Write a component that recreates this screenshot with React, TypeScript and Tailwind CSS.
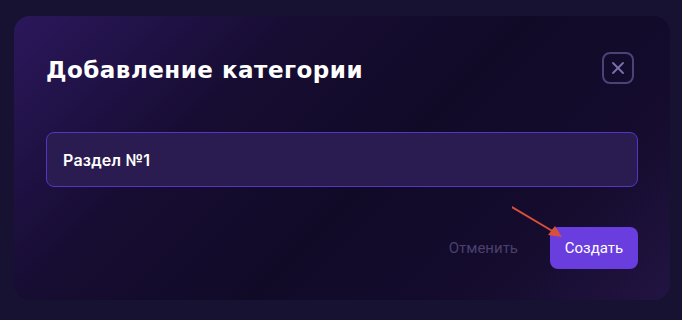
import { X } from "lucide-react";

export default function App() {
  return (
    <div className="w-[682px] h-[320px] bg-[#181232] pt-4 pl-[14px] font-['Inter',sans-serif]">
      <div className="relative w-[656px] h-[284px] rounded-[16px] bg-[linear-gradient(135deg,#2b175c_0%,#170d33_30%,#110a27_55%,#150c2e_80%,#221442_100%)] px-8 pt-9">
        <div className="flex items-start justify-between">
          <h2 className="text-[23px] leading-[32px] font-bold text-white tracking-[0.5px] pt-[2px] font-['DejaVu_Sans',sans-serif]">Добавление категории</h2>
          <button className="mr-1 w-8 h-8 rounded-[8px] border-2 border-[#4d4178] flex items-center justify-center text-[#7d6fae]">
            <X size={20} strokeWidth={2.2} />
          </button>
        </div>
        <div className="mt-[46px] h-[55px] rounded-[8px] border border-[#5634c4] bg-[#2a1c50] flex items-center px-4">
          <span className="text-white text-[16px] font-semibold tracking-[0.2px]">Раздел №1</span>
        </div>
        <div className="mt-10 flex items-center justify-end gap-8">
          <button className="text-[#4b3f6e] text-[15px] font-['Roboto',sans-serif]">Отменить</button>
          <button className="w-[88px] h-[42px] rounded-[8px] bg-[#6a3ddf] text-white text-[15px] font-['Roboto',sans-serif]">Создать</button>
        </div>
        <svg className="absolute left-[498px] top-[190px]" width="70" height="40" viewBox="0 0 70 40">
          <line x1="0" y1="1" x2="42" y2="26" stroke="#d8503a" strokeWidth="2" strokeLinecap="round" />
          <polygon points="50,31 36,29 43,20" fill="#d8503a" />
        </svg>
      </div>
    </div>
  );
}
